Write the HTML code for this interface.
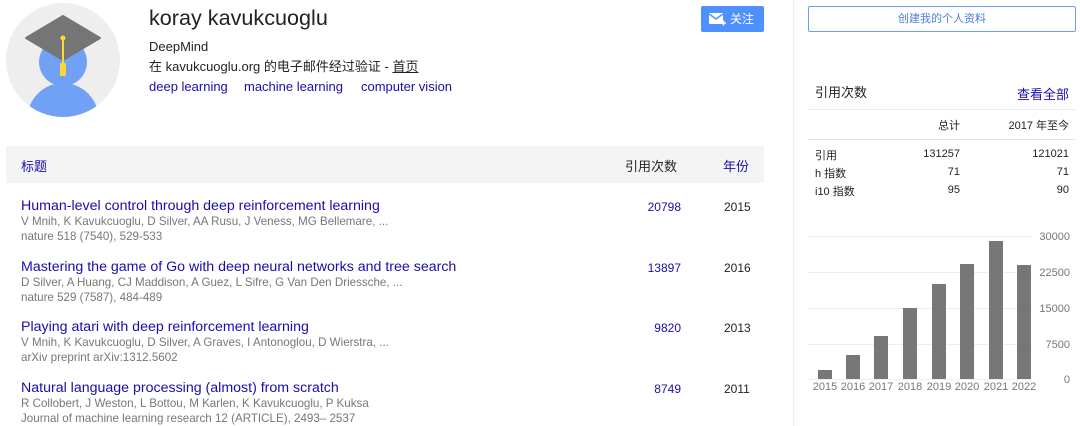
<!DOCTYPE html>
<html><head><meta charset="utf-8"><style>
*{margin:0;padding:0;box-sizing:border-box}
body{width:1080px;height:426px;overflow:hidden;background:#fff;font-family:"Liberation Sans","Noto Sans CJK SC",sans-serif;color:#222;position:relative}
.a{position:absolute;white-space:nowrap}
.lk{color:#1a0dab}
.t{font-size:14.2px;color:#1a0dab;line-height:16px}
.au{font-size:11.6px;color:#777;line-height:14px}
.r{text-align:right}
</style></head><body>
<svg class="a" style="left:0;top:0" width="130" height="125">
<defs><clipPath id="c"><circle cx="63" cy="60" r="57"/></clipPath></defs>
<circle cx="63" cy="60" r="57" fill="#eee"/>
<g clip-path="url(#c)"><circle cx="63" cy="62" r="24" fill="#70a1f5"/><ellipse cx="63" cy="120" rx="36" ry="37" fill="#70a1f5"/></g>
<polygon points="26,38 63,16 100,38 63,60" fill="#757575" stroke="#757575" stroke-width="2" stroke-linejoin="round"/>
<line x1="63" y1="38" x2="63" y2="64" stroke="#fdd835" stroke-width="2"/>
<circle cx="63" cy="38" r="2.5" fill="#fdd835"/>
<rect x="60" y="63" width="6" height="13" rx="1.5" fill="#fdd835"/>
</svg>
<div class="a" style="left:149px;top:5px;font-size:21.6px;color:#222">koray kavukcuoglu</div>
<div class="a" style="left:149px;top:39px;font-size:13px;color:#222">DeepMind</div>
<div class="a" style="left:149px;top:56px;font-size:13px;color:#222">在 kavukcuoglu.org 的电子邮件经过验证 - <span style="text-decoration:underline">首页</span></div>
<div class="a lk" style="left:149px;top:79px;font-size:13px">deep learning</div>
<div class="a lk" style="left:244px;top:79px;font-size:13px">machine learning</div>
<div class="a lk" style="left:361px;top:79px;font-size:13px">computer vision</div>
<div class="a" style="left:701px;top:6px;width:63px;height:26px;background:#4d90fe;border-radius:2px;color:#fff;font-size:12px;line-height:26px">
<svg style="position:absolute;left:8px;top:7px" width="18" height="14"><rect x="0" y="0" width="14" height="11" fill="#fff"/><polyline points="0,1 7,6 14,1" fill="none" stroke="#4d90fe" stroke-width="1.5"/><path d="M12 10h5M14.5 7.5v5" stroke="#fff" stroke-width="1.5"/></svg>
<span style="position:absolute;left:29px">关注</span></div>
<div class="a" style="left:6px;top:146px;width:758px;height:37px;background:#f4f4f4"></div>
<div class="a lk" style="left:21px;top:156px;font-size:13px">标题</div>
<div class="a" style="left:625px;top:156px;font-size:13px;color:#222">引用次数</div>
<div class="a lk" style="left:723px;top:156px;font-size:13px">年份</div>
<div class="a" style="left:793px;top:0;width:1px;height:426px;background:#eee"></div>

<div class="a t" style="left:21px;top:198px">Human-level control through deep reinforcement learning</div>
<div class="a au" style="left:21px;top:215px">V Mnih, K Kavukcuoglu, D Silver, AA Rusu, J Veness, MG Bellemare, ...</div>
<div class="a au" style="left:21px;top:230px">nature 518 (7540), 529-533</div>
<div class="a lk" style="left:600px;width:81px;top:200px;font-size:12px;text-align:right">20798</div>
<div class="a" style="left:724px;top:200px;font-size:12px">2015</div>

<div class="a t" style="left:21px;top:259px">Mastering the game of Go with deep neural networks and tree search</div>
<div class="a au" style="left:21px;top:276px">D Silver, A Huang, CJ Maddison, A Guez, L Sifre, G Van Den Driessche, ...</div>
<div class="a au" style="left:21px;top:291px">nature 529 (7587), 484-489</div>
<div class="a lk" style="left:600px;width:81px;top:261px;font-size:12px;text-align:right">13897</div>
<div class="a" style="left:724px;top:261px;font-size:12px">2016</div>

<div class="a t" style="left:21px;top:319px">Playing atari with deep reinforcement learning</div>
<div class="a au" style="left:21px;top:336px">V Mnih, K Kavukcuoglu, D Silver, A Graves, I Antonoglou, D Wierstra, ...</div>
<div class="a au" style="left:21px;top:351px">arXiv preprint arXiv:1312.5602</div>
<div class="a lk" style="left:600px;width:81px;top:321px;font-size:12px;text-align:right">9820</div>
<div class="a" style="left:724px;top:321px;font-size:12px">2013</div>

<div class="a t" style="left:21px;top:380px">Natural language processing (almost) from scratch</div>
<div class="a au" style="left:21px;top:397px">R Collobert, J Weston, L Bottou, M Karlen, K Kavukcuoglu, P Kuksa</div>
<div class="a au" style="left:21px;top:412px">Journal of machine learning research 12 (ARTICLE), 2493– 2537</div>
<div class="a lk" style="left:600px;width:81px;top:382px;font-size:12px;text-align:right">8749</div>
<div class="a" style="left:724px;top:382px;font-size:12px">2011</div>

<div class="a" style="left:808px;top:6px;width:268px;height:26px;border:1px solid #6a9ff5;border-radius:2px;color:#4d7fd8;font-size:11px;line-height:24px;text-align:center">创建我的个人资料</div>
<div class="a" style="left:815px;top:82px;font-size:13px;color:#222">引用次数</div>
<div class="a lk r" style="left:960px;width:109px;top:84px;font-size:13px">查看全部</div>
<div class="a" style="left:808px;top:109px;width:268px;height:1px;background:#eee"></div>
<div class="a" style="left:808px;top:139px;width:268px;height:1px;background:#e4e4e4"></div>
<div class="a r" style="left:880px;width:80px;top:117px;font-size:11px">总计</div>
<div class="a r" style="left:980px;width:89px;top:117px;font-size:11px">2017 年至今</div>
<div class="a" style="left:815px;top:147px;font-size:11px">引用</div>
<div class="a" style="left:815px;top:165px;font-size:11px">h 指数</div>
<div class="a" style="left:815px;top:183px;font-size:11px">i10 指数</div>
<div class="a r" style="left:880px;width:80px;top:148px;font-size:11px">131257</div>
<div class="a r" style="left:880px;width:80px;top:166px;font-size:11px">71</div>
<div class="a r" style="left:880px;width:80px;top:184px;font-size:11px">95</div>
<div class="a r" style="left:980px;width:89px;top:148px;font-size:11px">121021</div>
<div class="a r" style="left:980px;width:89px;top:166px;font-size:11px">71</div>
<div class="a r" style="left:980px;width:89px;top:184px;font-size:11px">90</div>

<svg class="a" style="left:800px;top:220px" width="280" height="206" font-family="Liberation Sans, sans-serif" font-size="11" fill="#777">
<g stroke="#eee" stroke-width="1"><line x1="8" y1="16.5" x2="232" y2="16.5"/><line x1="8" y1="52.5" x2="232" y2="52.5"/><line x1="8" y1="88.5" x2="232" y2="88.5"/><line x1="8" y1="124.5" x2="232" y2="124.5"/><line x1="8" y1="159.5" x2="232" y2="159.5"/></g>
<g fill="#777">
<rect x="18" y="150" width="14" height="9"/>
<rect x="46" y="135" width="14" height="24"/>
<rect x="74" y="116" width="14" height="43"/>
<rect x="103" y="88" width="14" height="71"/>
<rect x="132" y="64" width="14" height="95"/>
<rect x="160" y="44" width="14" height="115"/>
<rect x="189" y="21" width="14" height="138"/>
<rect x="217" y="45" width="14" height="114"/>
</g>
<g text-anchor="middle"><text x="25" y="170">2015</text><text x="53" y="170">2016</text><text x="81" y="170">2017</text><text x="110" y="170">2018</text><text x="139" y="170">2019</text><text x="167" y="170">2020</text><text x="196" y="170">2021</text><text x="224" y="170">2022</text></g>
<g text-anchor="end"><text x="270" y="20">30000</text><text x="270" y="56">22500</text><text x="270" y="92">15000</text><text x="270" y="128">7500</text><text x="270" y="163">0</text></g>
</svg>
</body></html>
